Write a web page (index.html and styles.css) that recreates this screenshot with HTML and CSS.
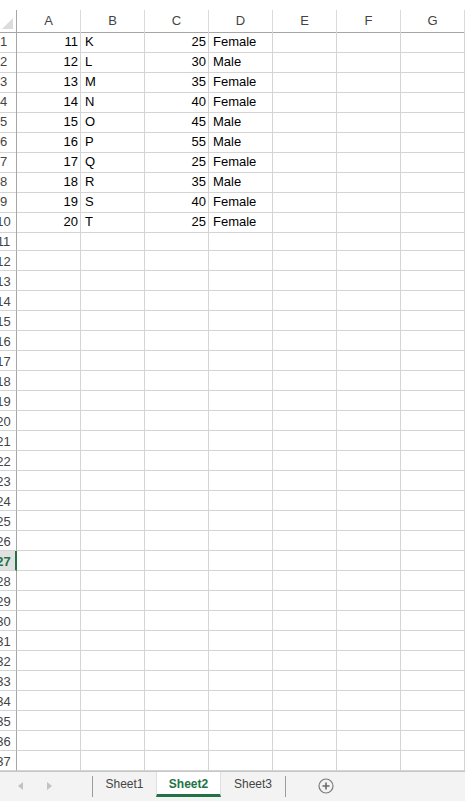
FILE: index.html
```html
<!DOCTYPE html>
<html>
<head>
<meta charset="utf-8">
<link rel="stylesheet" href="styles.css">
</head>
<body>
<div class="app">
  <div class="sheet">
    <div class="row head">
      <div class="corner"><div class="tri"></div></div>
      <div class="ch">A</div><div class="ch">B</div><div class="ch">C</div><div class="ch">D</div><div class="ch">E</div><div class="ch">F</div><div class="ch">G</div>
    </div>
    <div class="row"><div class="rh"><span>1</span></div><div class="c n">11</div><div class="c">K</div><div class="c n">25</div><div class="c">Female</div><div class="c"></div><div class="c"></div><div class="c"></div></div>
    <div class="row"><div class="rh"><span>2</span></div><div class="c n">12</div><div class="c">L</div><div class="c n">30</div><div class="c">Male</div><div class="c"></div><div class="c"></div><div class="c"></div></div>
    <div class="row"><div class="rh"><span>3</span></div><div class="c n">13</div><div class="c">M</div><div class="c n">35</div><div class="c">Female</div><div class="c"></div><div class="c"></div><div class="c"></div></div>
    <div class="row"><div class="rh"><span>4</span></div><div class="c n">14</div><div class="c">N</div><div class="c n">40</div><div class="c">Female</div><div class="c"></div><div class="c"></div><div class="c"></div></div>
    <div class="row"><div class="rh"><span>5</span></div><div class="c n">15</div><div class="c">O</div><div class="c n">45</div><div class="c">Male</div><div class="c"></div><div class="c"></div><div class="c"></div></div>
    <div class="row"><div class="rh"><span>6</span></div><div class="c n">16</div><div class="c">P</div><div class="c n">55</div><div class="c">Male</div><div class="c"></div><div class="c"></div><div class="c"></div></div>
    <div class="row"><div class="rh"><span>7</span></div><div class="c n">17</div><div class="c">Q</div><div class="c n">25</div><div class="c">Female</div><div class="c"></div><div class="c"></div><div class="c"></div></div>
    <div class="row"><div class="rh"><span>8</span></div><div class="c n">18</div><div class="c">R</div><div class="c n">35</div><div class="c">Male</div><div class="c"></div><div class="c"></div><div class="c"></div></div>
    <div class="row"><div class="rh"><span>9</span></div><div class="c n">19</div><div class="c">S</div><div class="c n">40</div><div class="c">Female</div><div class="c"></div><div class="c"></div><div class="c"></div></div>
    <div class="row"><div class="rh"><span>10</span></div><div class="c n">20</div><div class="c">T</div><div class="c n">25</div><div class="c">Female</div><div class="c"></div><div class="c"></div><div class="c"></div></div>
    <div class="row"><div class="rh"><span>11</span></div><div class="c"></div><div class="c"></div><div class="c"></div><div class="c"></div><div class="c"></div><div class="c"></div><div class="c"></div></div>
    <div class="row"><div class="rh"><span>12</span></div><div class="c"></div><div class="c"></div><div class="c"></div><div class="c"></div><div class="c"></div><div class="c"></div><div class="c"></div></div>
    <div class="row"><div class="rh"><span>13</span></div><div class="c"></div><div class="c"></div><div class="c"></div><div class="c"></div><div class="c"></div><div class="c"></div><div class="c"></div></div>
    <div class="row"><div class="rh"><span>14</span></div><div class="c"></div><div class="c"></div><div class="c"></div><div class="c"></div><div class="c"></div><div class="c"></div><div class="c"></div></div>
    <div class="row"><div class="rh"><span>15</span></div><div class="c"></div><div class="c"></div><div class="c"></div><div class="c"></div><div class="c"></div><div class="c"></div><div class="c"></div></div>
    <div class="row"><div class="rh"><span>16</span></div><div class="c"></div><div class="c"></div><div class="c"></div><div class="c"></div><div class="c"></div><div class="c"></div><div class="c"></div></div>
    <div class="row"><div class="rh"><span>17</span></div><div class="c"></div><div class="c"></div><div class="c"></div><div class="c"></div><div class="c"></div><div class="c"></div><div class="c"></div></div>
    <div class="row"><div class="rh"><span>18</span></div><div class="c"></div><div class="c"></div><div class="c"></div><div class="c"></div><div class="c"></div><div class="c"></div><div class="c"></div></div>
    <div class="row"><div class="rh"><span>19</span></div><div class="c"></div><div class="c"></div><div class="c"></div><div class="c"></div><div class="c"></div><div class="c"></div><div class="c"></div></div>
    <div class="row"><div class="rh"><span>20</span></div><div class="c"></div><div class="c"></div><div class="c"></div><div class="c"></div><div class="c"></div><div class="c"></div><div class="c"></div></div>
    <div class="row"><div class="rh"><span>21</span></div><div class="c"></div><div class="c"></div><div class="c"></div><div class="c"></div><div class="c"></div><div class="c"></div><div class="c"></div></div>
    <div class="row"><div class="rh"><span>22</span></div><div class="c"></div><div class="c"></div><div class="c"></div><div class="c"></div><div class="c"></div><div class="c"></div><div class="c"></div></div>
    <div class="row"><div class="rh"><span>23</span></div><div class="c"></div><div class="c"></div><div class="c"></div><div class="c"></div><div class="c"></div><div class="c"></div><div class="c"></div></div>
    <div class="row"><div class="rh"><span>24</span></div><div class="c"></div><div class="c"></div><div class="c"></div><div class="c"></div><div class="c"></div><div class="c"></div><div class="c"></div></div>
    <div class="row"><div class="rh"><span>25</span></div><div class="c"></div><div class="c"></div><div class="c"></div><div class="c"></div><div class="c"></div><div class="c"></div><div class="c"></div></div>
    <div class="row"><div class="rh"><span>26</span></div><div class="c"></div><div class="c"></div><div class="c"></div><div class="c"></div><div class="c"></div><div class="c"></div><div class="c"></div></div>
    <div class="row"><div class="rh active"><span>27</span></div><div class="c"></div><div class="c"></div><div class="c"></div><div class="c"></div><div class="c"></div><div class="c"></div><div class="c"></div></div>
    <div class="row"><div class="rh"><span>28</span></div><div class="c"></div><div class="c"></div><div class="c"></div><div class="c"></div><div class="c"></div><div class="c"></div><div class="c"></div></div>
    <div class="row"><div class="rh"><span>29</span></div><div class="c"></div><div class="c"></div><div class="c"></div><div class="c"></div><div class="c"></div><div class="c"></div><div class="c"></div></div>
    <div class="row"><div class="rh"><span>30</span></div><div class="c"></div><div class="c"></div><div class="c"></div><div class="c"></div><div class="c"></div><div class="c"></div><div class="c"></div></div>
    <div class="row"><div class="rh"><span>31</span></div><div class="c"></div><div class="c"></div><div class="c"></div><div class="c"></div><div class="c"></div><div class="c"></div><div class="c"></div></div>
    <div class="row"><div class="rh"><span>32</span></div><div class="c"></div><div class="c"></div><div class="c"></div><div class="c"></div><div class="c"></div><div class="c"></div><div class="c"></div></div>
    <div class="row"><div class="rh"><span>33</span></div><div class="c"></div><div class="c"></div><div class="c"></div><div class="c"></div><div class="c"></div><div class="c"></div><div class="c"></div></div>
    <div class="row"><div class="rh"><span>34</span></div><div class="c"></div><div class="c"></div><div class="c"></div><div class="c"></div><div class="c"></div><div class="c"></div><div class="c"></div></div>
    <div class="row"><div class="rh"><span>35</span></div><div class="c"></div><div class="c"></div><div class="c"></div><div class="c"></div><div class="c"></div><div class="c"></div><div class="c"></div></div>
    <div class="row"><div class="rh"><span>36</span></div><div class="c"></div><div class="c"></div><div class="c"></div><div class="c"></div><div class="c"></div><div class="c"></div><div class="c"></div></div>
    <div class="row"><div class="rh"><span>37</span></div><div class="c"></div><div class="c"></div><div class="c"></div><div class="c"></div><div class="c"></div><div class="c"></div><div class="c"></div></div>
  </div>
  <div class="tabbar">
    <div class="nav"><span class="arr left"></span><span class="arr right"></span></div>
    <div class="sep"></div>
    <div class="tab t1">Sheet1</div>
    <div class="tab active">Sheet2</div>
    <div class="tab t3">Sheet3</div>
    <div class="sep"></div>
    <div class="add">
      <svg width="16" height="16" viewBox="0 0 16 16"><circle cx="8" cy="8" r="7" fill="none" stroke="#7a7a7a" stroke-width="1.2"/><path d="M8 4.5v7M4.5 8h7" stroke="#6a6a6a" stroke-width="1.6"/></svg>
    </div>
  </div>
</div>
</body>
</html>
```

FILE: styles.css
```css
* { box-sizing: border-box; }
html, body { margin: 0; padding: 0; background: #fff; }
body {
  width: 465px;
  height: 801px;
  overflow: hidden;
  font-family: "Liberation Sans", Arial, sans-serif;
  font-size: 13px;
  color: #000;
}
.app { display: flex; flex-direction: column; height: 801px; }
.sheet { padding-top: 10px; flex: 0 0 auto; }
.row {
  display: grid;
  grid-template-columns: 17px repeat(7, 64px);
  height: 20px;
}
.row.head { height: 21px; }
.corner {
  border-right: 1px solid #a6a6a6;
  border-bottom: 1px solid #a6a6a6;
  display: flex;
  align-items: flex-end;
  justify-content: flex-end;
  padding: 0 3px 3px 0;
}
.tri {
  width: 0; height: 0;
  border-left: 11px solid transparent;
  border-bottom: 11px solid #dcdcdc;
}
.ch {
  border-right: 1px solid #dadada;
  border-bottom: 1px solid #a6a6a6;
  text-align: center;
  color: #444;
  line-height: 22px;
}
.rh {
  border-right: 1px solid #a6a6a6;
  border-bottom: 1px solid #d4d4d4;
  overflow: hidden;
  color: #444;
  line-height: 21px;
}
.rh span {
  display: block;
  width: 27px;
  margin-left: -10px;
  text-align: center;
}
.rh.active {
  background: #e1e1e1;
  color: #217346;
  font-weight: bold;
  border-right: 2px solid #217346;
}
.c {
  border-right: 1px solid #d4d4d4;
  border-bottom: 1px solid #d4d4d4;
  line-height: 21px;
  padding: 0 2px 0 4px;
  white-space: nowrap;
}
.c.n { text-align: right; }

.tabbar {
  flex: 1 1 auto;
  border-top: 1px solid #c6c6c6;
  background: #f3f3f3;
  display: flex;
  align-items: flex-start;
  font-size: 12px;
  color: #444;
}
.nav {
  width: 92px;
  height: 28px;
  display: flex;
  align-items: center;
  padding-left: 18px;
  gap: 24px;
}
.arr { width: 0; height: 0; border-top: 4px solid transparent; border-bottom: 4px solid transparent; }
.arr.left { border-right: 5px solid #c2c2c2; }
.arr.right { border-left: 5px solid #c2c2c2; }
.sep {
  width: 1px;
  height: 21px;
  margin-top: 4px;
  background: #9c9c9c;
}
.tab {
  height: 25px;
  line-height: 25px;
  text-align: center;
}
.tab.t1 { width: 63px; }
.tab.active {
  width: 65px;
  background: #fff;
  color: #217346;
  font-weight: bold;
  border-bottom: 3px solid #217346;
  line-height: 24px;
  border-left: 1px solid #e0e0e0;
  border-right: 1px solid #e0e0e0;
}
.tab.t3 { width: 64px; }
.add {
  margin-left: 32px;
  height: 28px;
  display: flex;
  align-items: center;
}
.add svg { display: block; }
```
